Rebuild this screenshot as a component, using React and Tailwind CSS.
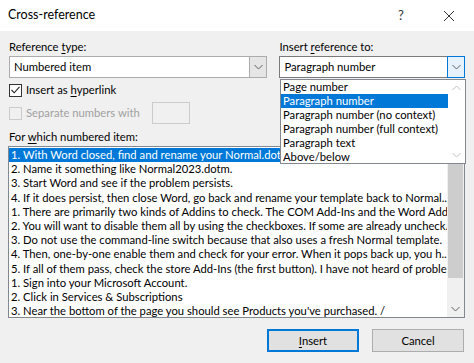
import React from 'react';

const font = { fontFamily: 'Lato, "Noto Sans", sans-serif' };

const items = [
  '1. With Word closed, find and rename your Normal.dotm file to something else.',
  '2. Name it something like Normal2023.dotm.',
  '3. Start Word and see if the problem persists.',
  '4. If it does persist, then close Word, go back and rename your template back to Normal..',
  '1. There are primarily two kinds of Addins to check. The COM Add-Ins and the Word Add.',
  '2. You will want to disable them all by using the checkboxes. If some are already uncheck..',
  '3. Do not use the command-line switch because that also uses a fresh Normal template.',
  '4. Then, one-by-one enable them and check for your error. When it pops back up, you h...',
  '5. If all of them pass, check the store Add-Ins (the first button). I have not heard of proble',
  '1. Sign into your Microsoft Account.',
  '2. Click in Services & Subscriptions',
  "3. Near the bottom of the page you should see Products you've purchased. /",
];

const options = [
  'Page number',
  'Paragraph number',
  'Paragraph number (no context)',
  'Paragraph number (full context)',
  'Paragraph text',
  'Above/below',
];

function Chevron({ up = false, color = '#606060' }) {
  return (
    <svg width="9" height="6" viewBox="0 0 9 6" className="block">
      <polyline
        points={up ? '0.5,5 4.5,1 8.5,5' : '0.5,1 4.5,5 8.5,1'}
        fill="none"
        stroke={color}
        strokeWidth="1"
      />
    </svg>
  );
}

export default function App() {
  return (
    <div className="relative w-[474px] h-[363px] bg-[#f0f0f0] overflow-hidden text-[11.25px] text-black" style={font}>
      {/* Title bar */}
      <div className="flex items-center h-[31px] bg-white pl-[8px]">
        <span className="text-[12.5px] leading-none">Cross-reference</span>
        <span className="ml-auto w-[12px] text-center text-[13px] leading-none text-[#333]">?</span>
        <svg width="12" height="12" viewBox="0 0 12 12" className="ml-[36px] mr-[19px]">
          <path d="M1 1 L11 11 M11 1 L1 11" stroke="#333" strokeWidth="1" />
        </svg>
      </div>

      <div className="px-[9px] pt-[8px]">
        {/* Top row */}
        <div className="flex gap-[12px]">
          <div className="w-[259px]">
            <div className="h-[17px] leading-[16px]">
              Reference <span className="underline underline-offset-2">t</span>ype:
            </div>
            <div className="flex h-[22px] bg-white border border-[#acacac]">
              <div className="flex-1 pl-[4px] leading-[20px]">Numbered item</div>
              <div className="w-[17px] bg-[#e5e5e5] border-l border-[#acacac] flex items-center justify-center">
                <Chevron />
              </div>
            </div>
          </div>
          <div className="w-[186px]">
            <div className="h-[17px] leading-[16px]">
              Insert <span className="underline underline-offset-2">r</span>eference to:
            </div>
            <div className="flex h-[22px] bg-white border border-[#7a7a7a]">
              <div className="flex-1 pl-[4px] leading-[20px]">Paragraph number</div>
              <div className="w-[18px] bg-[#e5f1fb] border border-[#0078d7] -my-px -mr-px flex items-center justify-center">
                <Chevron />
              </div>
            </div>
          </div>
        </div>

        {/* Checkboxes */}
        <div className="flex items-center h-[14px] mt-[5px]">
          <div className="w-[13px] h-[13px] bg-white border border-[#333] flex items-center justify-center">
            <svg width="9" height="8" viewBox="0 0 9 8">
              <polyline points="0.5,4 3.2,6.8 8.5,0.8" fill="none" stroke="#222" strokeWidth="1.1" />
            </svg>
          </div>
          <span className="ml-[4px] whitespace-nowrap">
            Insert as <span className="underline underline-offset-2">h</span>yperlink
          </span>
        </div>
        <div className="flex items-center h-[22px] mt-[5px]">
          <div className="w-[13px] h-[13px] bg-[#f0f0f0] border border-[#cccccc]" />
          <span className="ml-[4px] text-[#a0a0a0] w-[126px] whitespace-nowrap">Separate numbers with</span>
          <div className="w-[38px] h-[22px] border border-[#cccccc] bg-[#f0f0f0]" />
        </div>

        <div className="mt-[5px] h-[17px] leading-[16px]">
          For <span className="underline underline-offset-2">w</span>hich numbered item:
        </div>

        {/* List box */}
        <div className="flex -ml-px w-[457px] h-[172px] bg-white border border-[#828790]">
          <div className="flex-1 overflow-hidden pt-px">
            {items.map((t, i) => (
              <div
                key={i}
                className={
                  'h-[14.2px] leading-[14px] pl-[2px] whitespace-nowrap overflow-hidden ' +
                  (i === 0 ? 'bg-[#0078d7] text-white' : '')
                }
              >
                {t}
              </div>
            ))}
          </div>
          <div className="w-[17px] bg-[#f0f0f0] flex flex-col">
            <div className="h-[17px]" />
            <div className="h-[114px] bg-[#cdcdcd] mx-px" />
            <div className="flex-1" />
            <div className="h-[17px] flex items-center justify-center">
              <Chevron />
            </div>
          </div>
        </div>

        {/* Buttons */}
        <div className="flex justify-end gap-[13px] mt-[11px] pr-[1px]">
          <button className="w-[92px] h-[23px] bg-[#e1e1e1] border-2 border-[#0078d7] leading-none">
            <span className="underline underline-offset-2">I</span>nsert
          </button>
          <button className="w-[92px] h-[23px] bg-[#e1e1e1] border border-[#adadad] leading-none">Cancel</button>
        </div>
      </div>

      {/* Open dropdown */}
      <div className="absolute left-[280px] top-[79px] w-[186px] h-[85px] bg-white border border-[#828790] flex">
        <div className="flex-1 pt-0">
          {options.map((o, i) => (
            <div
              key={o}
              className={'h-[14px] leading-[14px] pl-[2px] whitespace-nowrap ' + (i === 1 ? 'bg-[#0078d7] text-white' : '')}
            >
              {o}
            </div>
          ))}
        </div>
        <div className="w-[17px] flex flex-col justify-between py-[5px] items-center">
          <Chevron up color="#c0c0c0" />
          <Chevron color="#c0c0c0" />
        </div>
      </div>
    </div>
  );
}
